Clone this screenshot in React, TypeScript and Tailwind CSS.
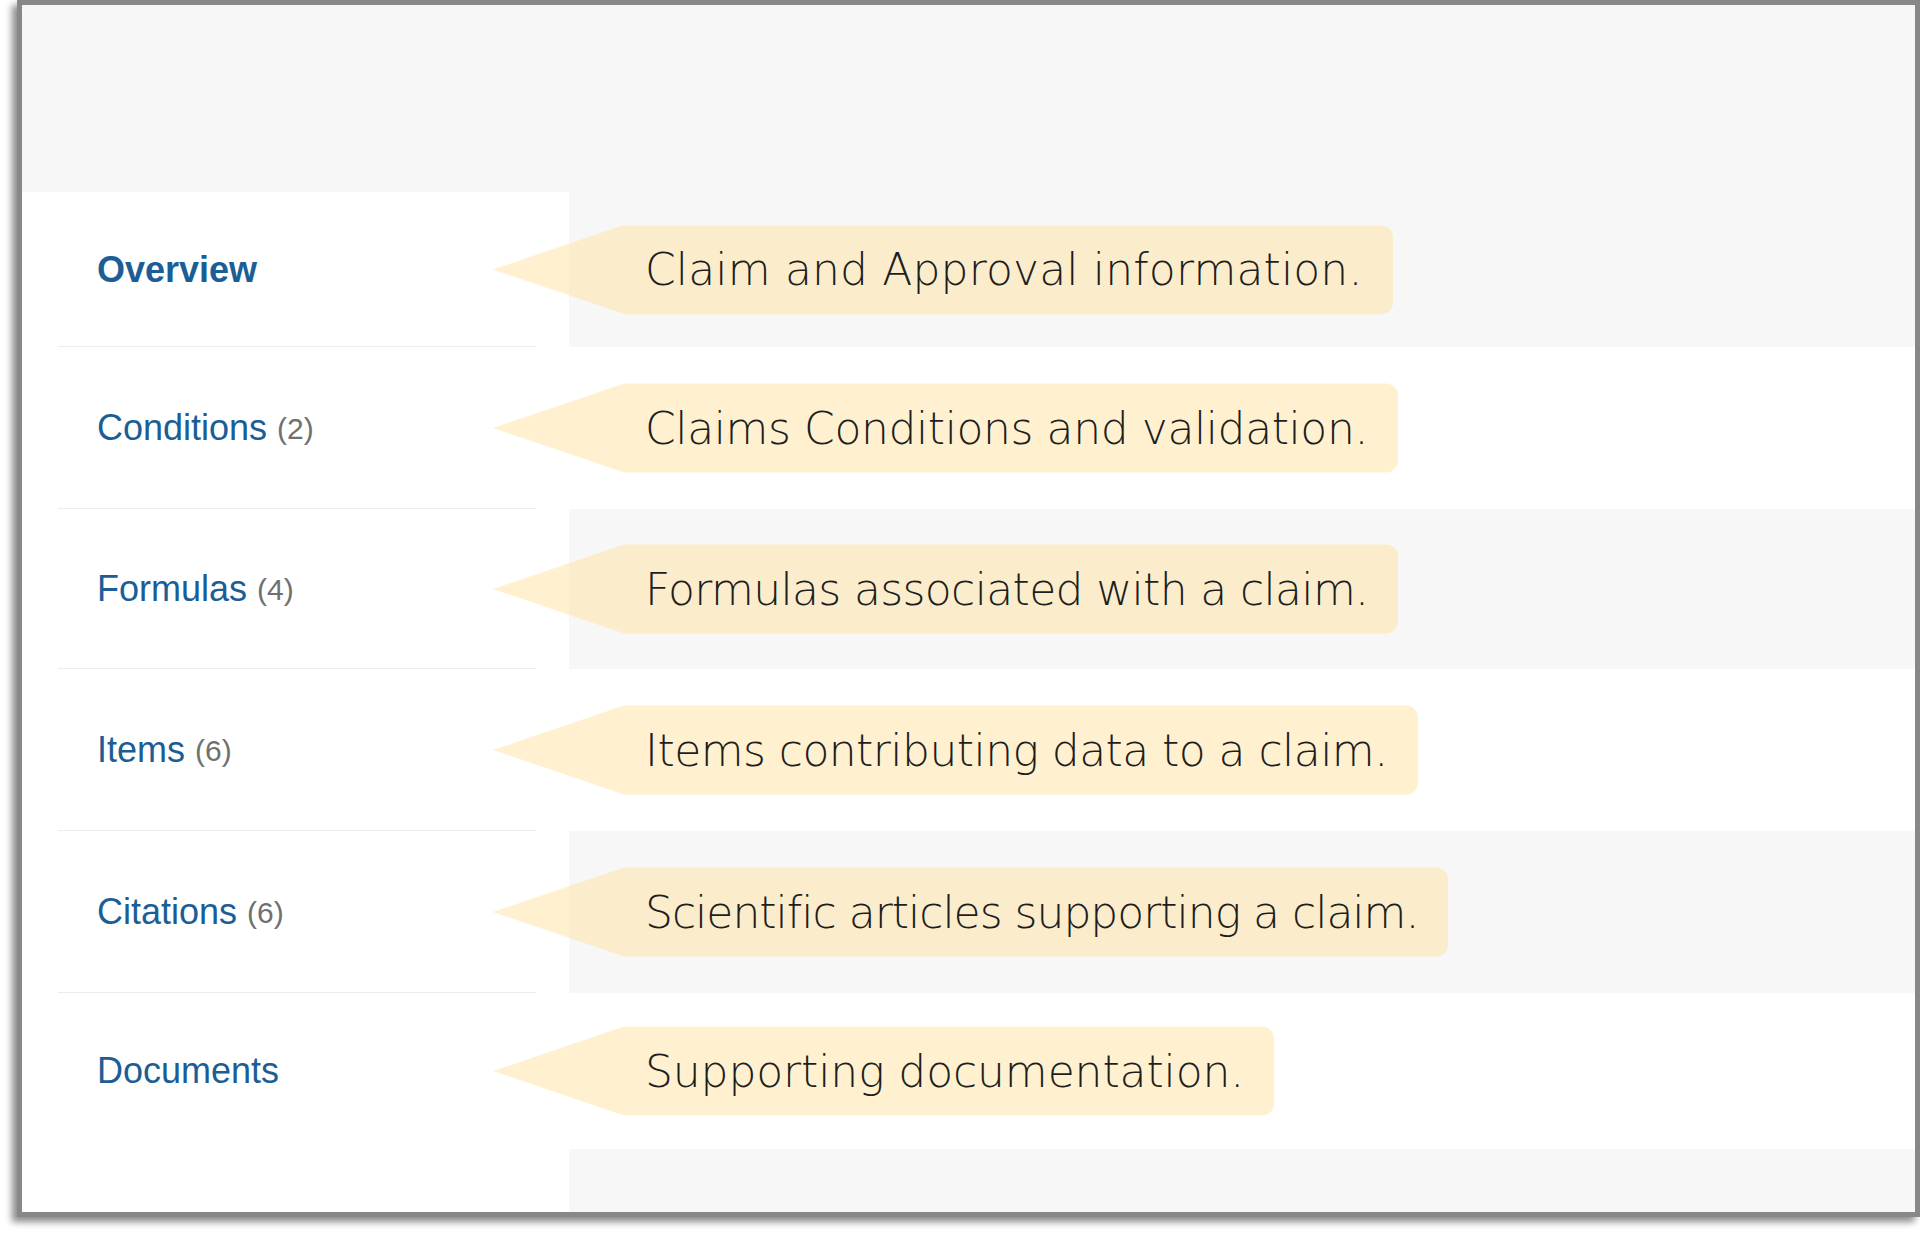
import React from 'react';

type Row = {
  label: string;
  count?: number;
  note: string;
  tracking: string;
  active?: boolean;
  height: string;
  shaded: boolean;
};

const rows: Row[] = [
  { label: 'Overview', note: 'Claim and Approval information.', tracking: 'tracking-[0.15px]', active: true, height: 'h-[155px]', shaded: true },
  { label: 'Conditions', count: 2, note: 'Claims Conditions and validation.', tracking: 'tracking-[-0.4px]', height: 'h-[162px]', shaded: false },
  { label: 'Formulas', count: 4, note: 'Formulas associated with a claim.', tracking: 'tracking-[-0.65px]', height: 'h-[160px]', shaded: true },
  { label: 'Items', count: 6, note: 'Items contributing data to a claim.', tracking: 'tracking-[-0.55px]', height: 'h-[162px]', shaded: false },
  { label: 'Citations', count: 6, note: 'Scientific articles supporting a claim.', tracking: 'tracking-[-1px]', height: 'h-[162px]', shaded: true },
  { label: 'Documents', note: 'Supporting documentation.', tracking: 'tracking-[-0.1px]', height: 'h-[156px]', shaded: false },
];

const Callout: React.FC<{ text: string; tracking: string }> = ({ text, tracking }) => (
  <div className="absolute left-[471px] top-1/2 -translate-y-1/2 flex h-[89px] pointer-events-none">
    <div className="w-[131px] h-full bg-[#ffe4a0]/50 [clip-path:polygon(100%_0,0_50%,100%_100%)]" />
    <div className="h-full flex items-center pl-[21px] pr-[30px] bg-[#ffe4a0]/50 rounded-r-[12px]">
      <span className={`text-[44px] leading-none text-[#1e1e1e] font-extralight whitespace-nowrap [font-family:'DejaVu_Sans',sans-serif] ${tracking}`}>
        {text}
      </span>
    </div>
  </div>
);

export default function App() {
  return (
    <div className="min-h-screen bg-white">
      <div className="ml-[17px] w-[1903px] h-[1217px] border-[5px] border-[#888888] shadow-[-5px_5px_7px_rgba(0,0,0,0.45)] bg-white flex flex-col overflow-hidden">
        <div className="h-[187px] shrink-0 bg-[#f7f7f7]" />
        {rows.map((r, i) => (
          <div key={r.label} className={`relative flex shrink-0 ${r.height}`}>
            <div className="w-[547px] shrink-0 bg-white relative flex items-center pl-[75px] [font-family:'Liberation_Sans',Arial,sans-serif]">
              <span className={`text-[36px] text-[#1b5e96] ${r.active ? 'font-bold' : ''}`}>{r.label}</span>
              {r.count !== undefined && (
                <span className="ml-[10px] text-[30px] text-[#707070]">({r.count})</span>
              )}
              {i < rows.length - 1 && (
                <div className="absolute bottom-[-1px] left-[36px] w-[478px] h-[2px] bg-[#ececec]" />
              )}
            </div>
            <div className={`flex-1 ${r.shaded ? 'bg-[#f7f7f7]' : 'bg-white'}`} />
            <Callout text={r.note} tracking={r.tracking} />
          </div>
        ))}
        <div className="flex flex-1">
          <div className="w-[547px] bg-white" />
          <div className="flex-1 bg-[#f7f7f7]" />
        </div>
      </div>
    </div>
  );
}
